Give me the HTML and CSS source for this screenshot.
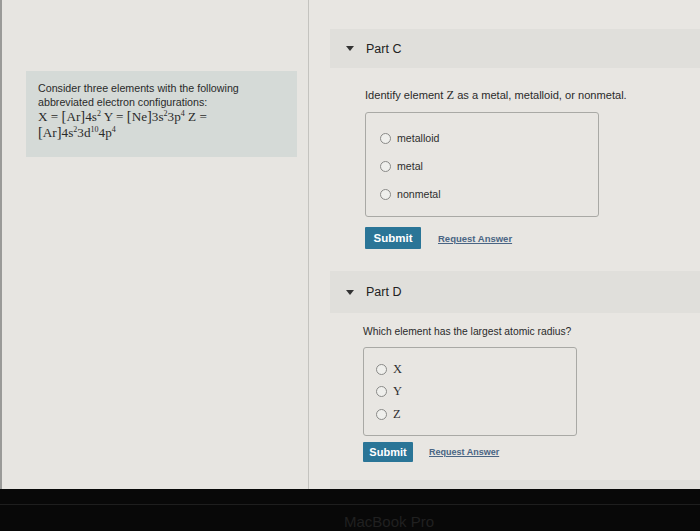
FILE: index.html
```html
<!DOCTYPE html>
<html>
<head>
<meta charset="utf-8">
<link rel="stylesheet" href="styles.css">
</head>
<body>
<div class="screen">
  <div class="left">
    <div class="info">
      <p class="intro">Consider three elements with the following abbreviated electron configurations:</p>
      <p class="formula">X = <span class="br">[</span>Ar<span class="br">]</span>4s<sup>2</sup> Y = <span class="br">[</span>Ne<span class="br">]</span>3s<sup>2</sup>3p<sup>4</sup> Z =<br><span class="br">[</span>Ar<span class="br">]</span>4s<sup>2</sup>3d<sup>10</sup>4p<sup>4</sup></p>
    </div>
  </div>
  <div class="right">
    <div class="part-head head-c"><span class="tri"></span><span class="part-title">Part C</span></div>
    <div class="part-body body-c">
      <p class="question">Identify element <span class="var">Z</span> as a metal, metalloid, or nonmetal.</p>
      <div class="options opts-c">
        <label class="opt"><span class="radio"></span><span>metalloid</span></label>
        <label class="opt"><span class="radio"></span><span>metal</span></label>
        <label class="opt"><span class="radio"></span><span>nonmetal</span></label>
      </div>
      <div class="actions">
        <span class="btn btn-c">Submit</span>
        <span class="req">Request Answer</span>
      </div>
    </div>
    <div class="part-head head-d"><span class="tri"></span><span class="part-title">Part D</span></div>
    <div class="part-body body-d">
      <p class="question">Which element has the largest atomic radius?</p>
      <div class="options opts-d">
        <label class="opt"><span class="radio"></span><span class="var">X</span></label>
        <label class="opt"><span class="radio"></span><span class="var">Y</span></label>
        <label class="opt"><span class="radio"></span><span class="var">Z</span></label>
      </div>
      <div class="actions">
        <span class="btn btn-d">Submit</span>
        <span class="req">Request Answer</span>
      </div>
    </div>
    <div class="part-head head-e"></div>
  </div>
</div>
<div class="bezel">
  <div class="bezel-line"></div>
  <div class="brand">MacBook Pro</div>
</div>
</body>
</html>
```

FILE: styles.css
```css
html, body {
  margin: 0;
  padding: 0;
  width: 700px;
  height: 531px;
  overflow: hidden;
  background: #0b0b0b;
  font-family: "Liberation Sans", Arial, sans-serif;
  color: #262626;
}
p { margin: 0; }

.screen {
  height: 489px;
  display: flex;
  background: #e8e6e2;
  border-left: 2px solid #9a9a98;
  box-sizing: border-box;
  overflow: hidden;
}

.left {
  width: 307px;
  flex: none;
  border-right: 1px solid #c4c3bf;
  padding: 71px 0 0 24px;
  box-sizing: border-box;
  background: #e7e5e1;
}

.info {
  width: 271px;
  height: 86px;
  box-sizing: border-box;
  background: #d5dad7;
  padding: 10px 8px 0 12px;
}
.intro {
  font-size: 10.7px;
  line-height: 14px;
  color: #2a2a2a;
}
.formula {
  font-family: "Liberation Serif", "Times New Roman", serif;
  font-size: 13.2px;
  line-height: 14.5px;
  color: #2a2a2a;
}
.formula .br {
  font-size: 14.5px;
}
.formula sup {
  font-size: 8px;
  vertical-align: 5px;
  line-height: 0;
}

.right {
  flex: 1;
  display: flex;
  flex-direction: column;
}
.right > * {
  flex: none;
}

.part-head {
  margin-left: 21px;
  background: #e0dfdb;
  display: flex;
  align-items: center;
  padding-left: 16px;
  gap: 12px;
}
.head-c { margin-top: 29px; height: 39px; }
.head-d { margin-top: 22px; height: 42px; }
.head-e { margin-top: 18px; height: 20px; }

.tri {
  width: 0;
  height: 0;
  border-left: 4px solid transparent;
  border-right: 4px solid transparent;
  border-top: 5px solid #333;
}
.part-title {
  font-size: 12.5px;
  color: #222;
}

.body-c { padding-top: 20px; padding-left: 56px; }
.body-d { padding-top: 12px; padding-left: 54px; }

.question {
  line-height: 14px;
  color: #2a2a2a;
}
.body-c .question { font-size: 11.1px; }
.body-d .question { font-size: 10.3px; }
.var {
  font-family: "Liberation Serif", "Times New Roman", serif;
  font-size: 12.5px;
}

.options {
  margin-top: 10px;
  border: 1px solid #a9a9a5;
  border-radius: 3px;
  box-sizing: border-box;
  display: flex;
  flex-direction: column;
}
.opts-c {
  width: 234px;
  height: 105px;
  padding: 18px 0 0 14px;
  gap: 14px;
}
.opts-d {
  width: 214px;
  height: 89px;
  margin-top: 8px;
  padding: 14px 0 0 12px;
  gap: 8.5px;
}

.opt {
  display: flex;
  align-items: center;
  gap: 6px;
  font-size: 10.6px;
  color: #2e2e2e;
  height: 14px;
}
.radio {
  width: 9px;
  height: 9px;
  border: 1px solid #8a8a88;
  border-radius: 50%;
  background: #efefec;
  flex: none;
}

.actions {
  display: flex;
  align-items: center;
  gap: 17px;
}
.body-c .actions { margin-top: 10px; }
.body-d .actions { margin-top: 6px; gap: 16px; }

.btn {
  background: #2a7597;
  color: #fff;
  font-weight: bold;
  font-size: 11.5px;
  display: flex;
  align-items: center;
  justify-content: center;
  border-radius: 1px;
}
.btn-c { width: 56px; height: 22px; }
.btn-d { width: 50px; height: 20px; font-size: 11px; }

.req {
  font-size: 9.5px;
  font-weight: bold;
  color: #4a6584;
  text-decoration: underline;
}
.body-d .req { font-size: 9px; }

.bezel {
  height: 42px;
  background: #080808;
  overflow: hidden;
}
.bezel-line {
  height: 1px;
  margin-top: 15px;
  background: #1e1e1e;
}
.brand {
  text-align: center;
  padding-left: 78px;
  margin-top: 9px;
  font-size: 15px;
  line-height: 16px;
  color: #202020;
}
```
